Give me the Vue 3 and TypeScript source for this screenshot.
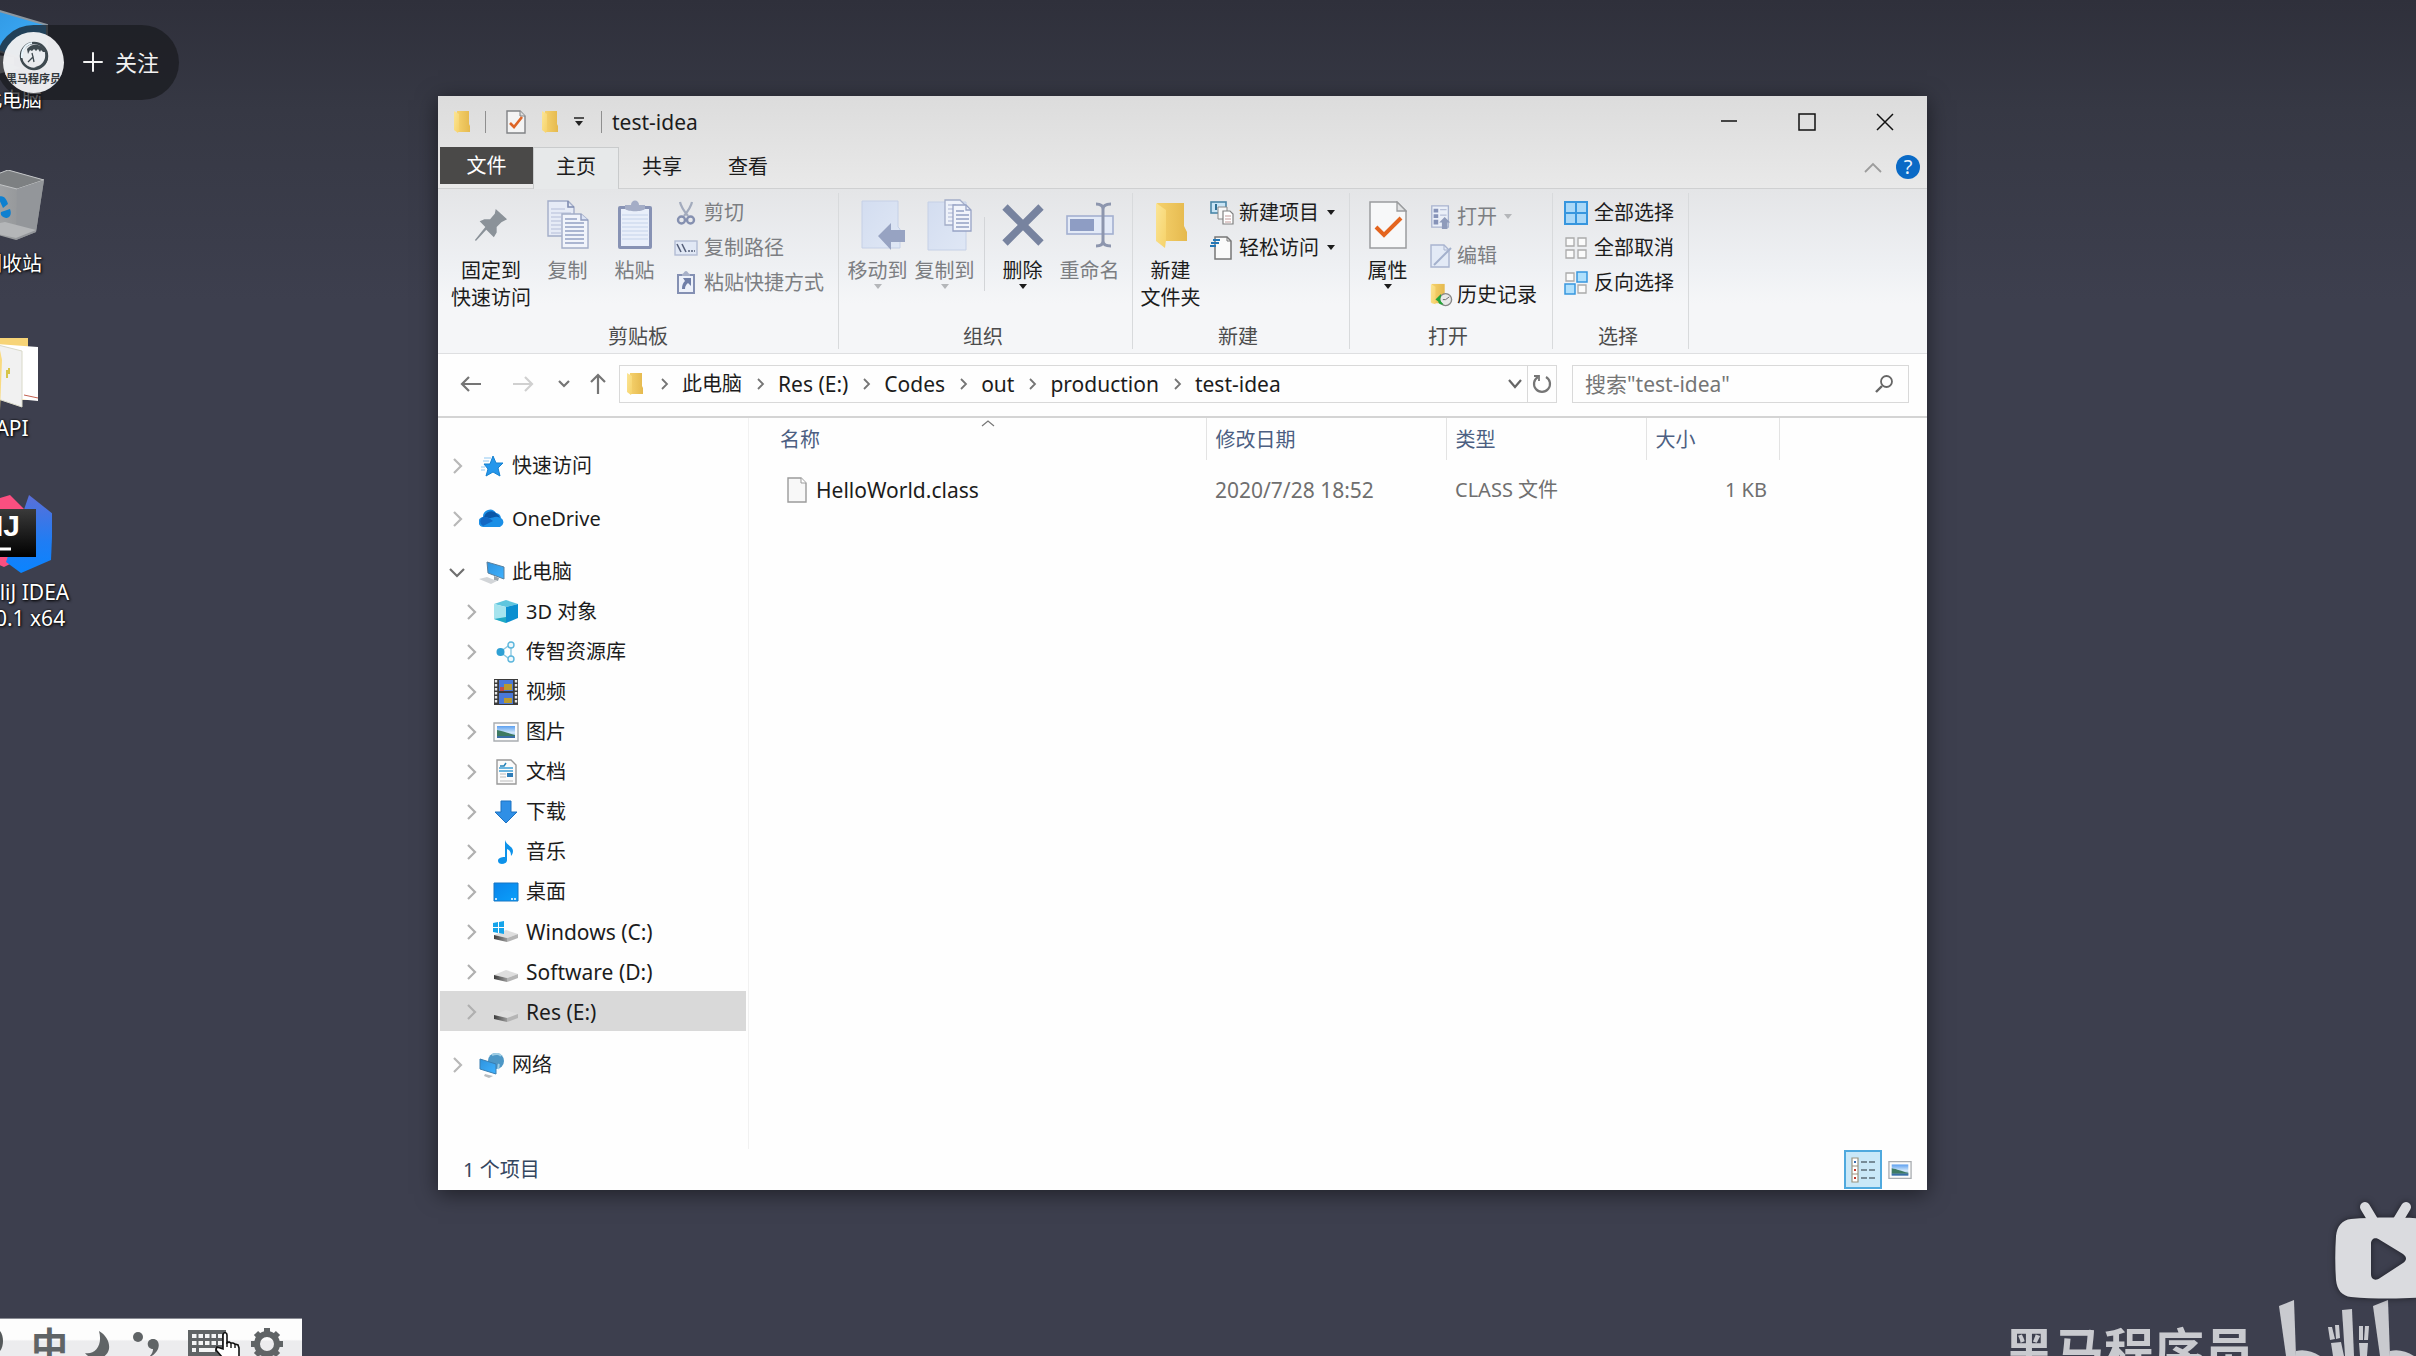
<script setup lang="ts">
import { ref } from 'vue'

interface Command {
  label: string
  icon: string
  disabled?: boolean
  menu?: boolean
}
interface BigCommand {
  lines: string[]
  icon: string
  disabled?: boolean
  menu?: boolean
  wide?: boolean
  divided?: boolean
}
interface Group {
  name: string
  key: string
  big: BigCommand[]
  small: Command[]
}
interface TreeNode {
  label: string
  icon: string
  latin?: boolean
  children?: TreeNode[]
}

const groups: Group[] = [
  {
    name: '剪贴板',
    key: 'clipboard',
    big: [
      { lines: ['固定到', '快速访问'], icon: 'pin', wide: true },
      { lines: ['复制'], icon: 'copy', disabled: true },
      { lines: ['粘贴'], icon: 'paste', disabled: true },
    ],
    small: [
      { label: '剪切', icon: 'cut', disabled: true },
      { label: '复制路径', icon: 'path', disabled: true },
      { label: '粘贴快捷方式', icon: 'shortcut', disabled: true },
    ],
  },
  {
    name: '组织',
    key: 'organize',
    big: [
      { lines: ['移动到'], icon: 'move', disabled: true, menu: true },
      { lines: ['复制到'], icon: 'copyto', disabled: true, menu: true },
      { lines: ['删除'], icon: 'delete', menu: true, divided: true },
      { lines: ['重命名'], icon: 'rename', disabled: true },
    ],
    small: [],
  },
  {
    name: '新建',
    key: 'new',
    big: [{ lines: ['新建', '文件夹'], icon: 'bigfolder' }],
    small: [
      { label: '新建项目', icon: 'newitem', menu: true },
      { label: '轻松访问', icon: 'easy', menu: true },
    ],
  },
  {
    name: '打开',
    key: 'open',
    big: [{ lines: ['属性'], icon: 'props', menu: true }],
    small: [
      { label: '打开', icon: 'open', disabled: true, menu: true },
      { label: '编辑', icon: 'edit', disabled: true },
      { label: '历史记录', icon: 'history' },
    ],
  },
  {
    name: '选择',
    key: 'select',
    big: [],
    small: [
      { label: '全部选择', icon: 'selall' },
      { label: '全部取消', icon: 'selnone' },
      { label: '反向选择', icon: 'selinv' },
    ],
  },
]

const tree: TreeNode[] = [
  { label: '快速访问', icon: 'star' },
  { label: 'OneDrive', icon: 'cloud' },
  {
    label: '此电脑',
    icon: 'pc',
    children: [
      { label: '3D 对象', icon: 'cube' },
      { label: '传智资源库', icon: 'share' },
      { label: '视频', icon: 'video' },
      { label: '图片', icon: 'picture' },
      { label: '文档', icon: 'doc' },
      { label: '下载', icon: 'download' },
      { label: '音乐', icon: 'music' },
      { label: '桌面', icon: 'desktop' },
      { label: 'Windows (C:)', icon: 'winDrive', latin: true },
      { label: 'Software (D:)', icon: 'drive', latin: true },
      { label: 'Res (E:)', icon: 'drive', latin: true },
    ],
  },
  { label: '网络', icon: 'network' },
]

const selected = ref('Res (E:)')
const query = ref('')
const crumbs = ['此电脑', 'Res (E:)', 'Codes', 'out', 'production', 'test-idea']
const tabs = ['主页', '共享', '查看']
const shortcuts = [
  { icon: 'bigpc', lines: ['此电脑'] },
  { icon: 'bin', lines: ['回收站'] },
  { icon: 'apifolder', lines: ['API'], latin: true },
  { icon: 'idea', lines: ['IntelliJ IDEA', '2020.1 x64'], latin: true },
]
</script>

<template>
  <svg class="defs" aria-hidden="true">
    <defs>
      <linearGradient id="gFolder" x1="0" y1="0" x2="1" y2="0">
        <stop offset="0" stop-color="#f5d16c" /><stop offset="1" stop-color="#e5b94e" />
      </linearGradient>
      <linearGradient id="gFlap" x1="0" y1="0" x2="1" y2="1">
        <stop offset="0" stop-color="#fbe596" /><stop offset="1" stop-color="#f6d269" />
      </linearGradient>
      <linearGradient id="gScreen" x1="0" y1="0" x2="1" y2="1">
        <stop offset="0" stop-color="#2f93dd" /><stop offset="1" stop-color="#3fb2ff" />
      </linearGradient>
      <linearGradient id="gDesk" x1="0" y1="0" x2="1" y2="1">
        <stop offset="0" stop-color="#0a84ea" /><stop offset="1" stop-color="#0aa0fb" />
      </linearGradient>
      <linearGradient id="gBox" x1="0" y1="0" x2="1" y2="1">
        <stop offset="0" stop-color="#d3ddf0" /><stop offset="1" stop-color="#dfe7f5" />
      </linearGradient>
      <linearGradient id="gDrive" x1="0" y1="0" x2="1" y2="0">
        <stop offset="0" stop-color="#3d3d3d" /><stop offset="1" stop-color="#9a9a9a" />
      </linearGradient>
      <linearGradient id="gIdea" x1="0" y1="0" x2="0" y2="1">
        <stop offset="0" stop-color="#5b6fd8" /><stop offset=".6" stop-color="#1f7df4" /><stop offset="1" stop-color="#0a84ff" />
      </linearGradient>
      <linearGradient id="gBlack" x1="0" y1="0" x2="0" y2="1">
        <stop offset="0" stop-color="#3a3a3a" /><stop offset="1" stop-color="#000" />
      </linearGradient>
      <linearGradient id="gSky" x1="0" y1="0" x2="0" y2="1">
        <stop offset="0" stop-color="#5b9ff0" /><stop offset=".55" stop-color="#cfe6fa" /><stop offset="1" stop-color="#7fb0dc" />
      </linearGradient>
      <linearGradient id="gBin" x1="0" y1="0" x2="1" y2="0">
        <stop offset="0" stop-color="#a7a9ab" /><stop offset="1" stop-color="#8a8d90" />
      </linearGradient>
    </defs>

    <symbol id="folder" viewBox="0 0 16 24">
      <path d="M3 1h12v13l1 2v6H3z" fill="url(#gFolder)" />
      <path d="M0 1l5 3v16l-1 3-4-3z" fill="url(#gFlap)" />
    </symbol>
    <symbol id="check" viewBox="0 0 20 24">
      <path d="M1 1h13l5 5v17H1z" fill="#f4f4f4" stroke="#808285" stroke-width="1.4" />
      <path d="M14 1v5h5" fill="#ddd" stroke="#808285" />
      <path d="M4 13l4 4 8-10" fill="none" stroke="#dd6526" stroke-width="2.6" />
    </symbol>
    <symbol id="pin" viewBox="0 0 36 36">
      <path d="M23 1l12 11-4 2-2 1-5 5 0 6-3 5-8-8L2 35l-1-1 11-14-6-6 5-2 6 0 5-6z" fill="#8b9299" />
    </symbol>
    <symbol id="copy" viewBox="0 0 42 50">
      <path d="M1 1h20l6 6v29H1z" fill="#e6ebf6" stroke="#a3adc8" stroke-width="1.4" />
      <path d="M21 1v6h6" fill="none" stroke="#7e8bb0" stroke-width="1.6" />
      <path d="M4 9h14M4 13h20M4 17h10M4 21h10M4 25h10M4 29h10M4 33h10" stroke="#b4bdd8" stroke-width="1.2" />
      <path d="M15 14h19l7 6v28H15z" fill="#f1f4fb" stroke="#a3adc8" stroke-width="1.4" />
      <path d="M34 14v6h7" fill="#dbe3f5" stroke="#8f9bbd" stroke-width="1.4" />
      <path d="M18 19h12M18 23h19M18 27h19M18 31h19M18 35h19M18 39h19M18 43h19" stroke="#93a0c3" stroke-width="1.4" />
    </symbol>
    <symbol id="paste" viewBox="0 0 36 50">
      <rect x="1" y="6" width="34" height="43" rx="2" fill="#8792b4" />
      <rect x="4" y="9" width="28" height="37" fill="#e9effa" />
      <path d="M5 15h26M5 19h26M5 23h26M5 27h26M5 31h26M5 35h26M5 39h26" stroke="#c5d3ea" />
      <path d="M8 5h6c0-6 8-6 8 0h6v4c-3 3-17 3-20 0z" fill="#a4adc6" />
    </symbol>
    <symbol id="cut" viewBox="0 0 24 24">
      <path d="M6 1c1 5 4 9 8 14M18 1c-1 5-4 9-8 14" fill="none" stroke="#a3abbd" stroke-width="2.2" />
      <circle cx="7.500" cy="19" r="3.500" fill="none" stroke="#8590b0" stroke-width="2.4" />
      <circle cx="16.500" cy="19" r="3.500" fill="none" stroke="#8590b0" stroke-width="2.4" />
    </symbol>
    <symbol id="path" viewBox="0 0 24 24">
      <rect x="1" y="5" width="22" height="14" fill="#e1e8f5" stroke="#b3bdd4" stroke-width="1.4" />
      <path d="M3 8l4 8M8 8l4 8" stroke="#56607a" stroke-width="1.6" />
      <path d="M14 15h2M17 15h2M20 15h1" stroke="#56607a" stroke-width="1.6" />
    </symbol>
    <symbol id="shortcut" viewBox="0 0 24 24">
      <path d="M3 3h18v20H3z" fill="#8490b3" />
      <path d="M5 5h14v16H5z" fill="#edf1fa" />
      <path d="M8 3c2 0 2-3 4-3s2 3 4 3v2H8z" fill="#a7b0c8" />
      <path d="M9 7h8v8l-3-3c-2 2-3 3-3 6H8c0-4 1-6 3-8z" fill="#707fa8" />
    </symbol>
    <symbol id="move" viewBox="0 0 44 50">
      <path d="M1 1h36v26l2 2v19H1z" fill="url(#gBox)" stroke="#c5d0e6" />
      <path d="M17 36l13-13v7h14v12H30v8z" fill="#97a3c2" />
    </symbol>
    <symbol id="copyto" viewBox="0 0 46 52">
      <path d="M1 3h38v48H1z" fill="url(#gBox)" stroke="#c5d0e6" />
      <path d="M18 1h15l5 5v20H18z" fill="#eef2fa" stroke="#a3adc8" stroke-width="1.3" />
      <path d="M21 6h8M21 10h5M21 14h5M21 18h5M21 22h5" stroke="#a9b4d2" stroke-width="1.2" />
      <path d="M26 6h13l5 5v21H26z" fill="#f1f4fb" stroke="#97a3c5" stroke-width="1.3" />
      <path d="M39 6v5h5" fill="none" stroke="#97a3c5" stroke-width="1.3" />
      <path d="M29 12h8M29 16h13M29 20h13M29 24h13M29 28h13" stroke="#93a0c3" stroke-width="1.3" />
    </symbol>
    <symbol id="delete" viewBox="0 0 42 42">
      <path d="M3 3l36 36M39 3L3 39" stroke="#77839f" stroke-width="7.500" />
    </symbol>
    <symbol id="rename" viewBox="0 0 48 46">
      <rect x="1" y="14" width="46" height="18" fill="#e3eaf7" stroke="#a3b0d0" stroke-width="1.6" />
      <rect x="4" y="17" width="24" height="12" fill="#8e9dc4" />
      <path d="M30 2c4 0 7 1 7 5v32c0 4-3 5-7 5M45 2c-4 0-8 1-8 5M45 44c-4 0-8-1-8-5" fill="none" stroke="#8d96ae" stroke-width="3" />
    </symbol>
    <symbol id="bigfolder" viewBox="0 0 32 46">
      <path d="M2 1h27v23l3 6v9H8z" fill="url(#gFolder)" />
      <path d="M1 1l10 7v30l-1 8-9-7z" fill="url(#gFlap)" />
    </symbol>
    <symbol id="newitem" viewBox="0 0 24 24">
      <rect x="1" y="1" width="15" height="11" fill="#c8e4f5" stroke="#4a86a8" stroke-width="1.600" />
      <path d="M6 3v6" stroke="#2f6f94" stroke-width="2" />
      <path d="M8 6h9v12H8z" fill="#f7f7f7" stroke="#888" />
      <path d="M13 10h7l3 3v10H13z" fill="#fff" stroke="#808080" stroke-width="1.200" />
      <path d="M15 15h6M15 18h6M15 21h6" stroke="#c29a9a" />
    </symbol>
    <symbol id="easy" viewBox="0 0 24 24">
      <path d="M5 1h12l4 4v18H5z" fill="#fafafa" stroke="#777" stroke-width="1.500" />
      <path d="M17 1v4h4" fill="none" stroke="#777" />
      <path d="M3 4h7M1 7h8M0 10h6" stroke="#2577b5" stroke-width="1.800" />
    </symbol>
    <symbol id="props" viewBox="0 0 38 48">
      <path d="M1 1h27l9 9v37H1z" fill="#f7f8f9" stroke="#9a9c9e" stroke-width="1.500" />
      <path d="M28 1v9h9z" fill="#e2e3e4" stroke="#9a9c9e" stroke-width="1.300" />
      <path d="M7 26l8 8 17-17" fill="none" stroke="#e4651f" stroke-width="4" />
    </symbol>
    <symbol id="open" viewBox="0 0 24 26">
      <path d="M2 1h18v23H2z" fill="#eaeff8" stroke="#a9b4cf" stroke-width="1.400" />
      <path d="M4 4h5v4H4zM4 10h5v4H4zM4 16h5v5H4z" fill="#8693b8" />
      <path d="M11 5h7M11 11h7" stroke="#b7c0d8" stroke-width="1.500" />
      <path d="M16 13l6 6h-3v7h-6v-7h-3z" fill="#8f9bba" />
    </symbol>
    <symbol id="edit" viewBox="0 0 24 24">
      <path d="M2 1h13l5 5v17H2z" fill="#e3eaf6" stroke="#a9b4cf" stroke-width="1.400" />
      <path d="M5 21L22 4" stroke="#a3b0cc" stroke-width="2" />
      <path d="M15 1v5h5" fill="none" stroke="#a9b4cf" />
    </symbol>
    <symbol id="history" viewBox="0 0 24 26">
      <path d="M2 1h14v21H2z" fill="url(#gFolder)" />
      <path d="M1 1l5 3v19l-5-2z" fill="url(#gFlap)" />
      <circle cx="17" cy="18" r="6.500" fill="#e8e8e8" stroke="#868686" stroke-width="1.500" />
      <path d="M17 18l4-3M17 18h-3" stroke="#666" />
      <path d="M6 18l6-6v3c-2 3 0 6 3 8-4 1-6-1-6-3z" fill="#24a338" />
    </symbol>
    <symbol id="selall" viewBox="0 0 24 24">
      <path d="M0 0h24v24H0z" fill="#3796de" />
      <path d="M2 2h9v9H2zM13 2h9v9h-9zM2 13h9v9H2zM13 13h9v9h-9z" fill="#a9d8f8" />
    </symbol>
    <symbol id="selnone" viewBox="0 0 24 24">
      <path d="M2 2h8v8H2zM14 2h8v8h-8zM2 14h8v8H2zM14 14h8v8h-8z" fill="#fbfbfb" stroke="#aaa" stroke-width="1.300" />
    </symbol>
    <symbol id="selinv" viewBox="0 0 24 24">
      <path d="M2 2h8v8H2zM14 14h8v8h-8z" fill="#fbfbfb" stroke="#aaa" stroke-width="1.300" />
      <path d="M13 1h10v10H13zM1 13h10v10H1z" fill="#b0e0fc" stroke="#3796de" stroke-width="1.500" />
    </symbol>

    <symbol id="star" viewBox="0 0 26 26">
      <path d="M14 3l3 7h7l-5 5 2 8-7-4-7 4 2-7-4-5h6z" fill="#2597ec" stroke="#1480cf" />
      <path d="M5 5h7M4 8h6M2 14h4M2 17h4" stroke="#8fc8f2" stroke-width="1.200" />
    </symbol>
    <symbol id="cloud" viewBox="0 0 26 26">
      <path d="M5 21a5 5 0 0 1-1-10 7 7 0 0 1 13-4 6 6 0 0 1 5 5 5 5 0 0 1-1 9z" fill="#1b8fe6" />
      <path d="M5 11a7.500 7.500 0 0 1 13-3 8 8 0 0 1 3 4c-5-3-8 1-11 0s-4-1-5-1z" fill="#0a57a8" />
      <path d="M4 20a5 5 0 0 1 0-9c4-1 7 2 10 4z" fill="#1268c4" />
    </symbol>
    <symbol id="pc" viewBox="0 0 26 26">
      <path d="M8 3l17 5v12L9 14z" fill="url(#gScreen)" stroke="#5a7f9c" />
      <path d="M15 17l5 2-1 3-4-1z" fill="#9aa4ab" />
      <path d="M0 20l8-2 10 4-6 3z" fill="#d2d5d8" />
    </symbol>
    <symbol id="cube" viewBox="0 0 26 26">
      <path d="M1 5l12-4 12 4-12 3z" fill="#5fc6de" />
      <path d="M1 5l12 3v16L1 20z" fill="#a6e4ee" />
      <path d="M25 5L13 8v16l12-5z" fill="#0b8fd0" />
      <path d="M13 18l-12 2 12 4z" fill="#1fa9c4" />
    </symbol>
    <symbol id="share" viewBox="0 0 26 26">
      <path d="M7 13l11-8v16z" fill="none" stroke="#8cc9e2" stroke-width="1.400" />
      <circle cx="7.500" cy="13" r="4" fill="#2fa0d4" />
      <circle cx="18" cy="6" r="3" fill="#eef8fc" stroke="#5cb6dc" stroke-width="1.400" />
      <circle cx="18" cy="20" r="3" fill="#eef8fc" stroke="#5cb6dc" stroke-width="1.400" />
    </symbol>
    <symbol id="video" viewBox="0 0 26 26">
      <path d="M1 0h24v26H1z" fill="#3b3b3b" />
      <path d="M6 1h14v11H6zM6 14h14v11H6z" fill="#4a78d8" />
      <path d="M11 5h8v6h-8zM11 19h8v5h-8z" fill="#b99a2e" />
      <path d="M7 8h4v4H7z" fill="#c44c44" />
      <path d="M3 1v24M23 1v24" stroke="#e8e8e8" stroke-width="2.400" stroke-dasharray="2.500 1.500" />
    </symbol>
    <symbol id="picture" viewBox="0 0 26 26">
      <path d="M1 4h24v18H1z" fill="#fbfbfb" stroke="#a9adb1" stroke-width="1.400" />
      <path d="M4 7h18v12H4z" fill="url(#gSky)" />
      <path d="M4 11c6 1 10 3 18 5v1H4z" fill="#3e7a62" />
      <path d="M4 17h18v2H4z" fill="#3a6ea5" />
    </symbol>
    <symbol id="doc" viewBox="0 0 26 26">
      <path d="M4 1h14l5 5v19H4z" fill="#fbfbfb" stroke="#999" stroke-width="1.400" />
      <path d="M7 7h4l2-3" stroke="#2583b8" stroke-width="1.500" fill="none" />
      <path d="M6 9h14M6 12h14" stroke="#3ea0d8" stroke-width="1.600" />
      <path d="M7 15h6M7 18h6M7 22h13" stroke="#bbb" stroke-width="1.200" />
      <path d="M14 14h6v4h-6z" fill="#2f7db8" />
    </symbol>
    <symbol id="download" viewBox="0 0 26 26">
      <path d="M8 2h10v11h6L13 24 2 13h6z" fill="#2f8fe6" stroke="#1c72c2" />
    </symbol>
    <symbol id="music" viewBox="0 0 26 26">
      <path d="M12 1c1 5 8 6 8 11 0 2-1 4-2 5 0-4-1-6-4-7v11c0 5-9 5-9 1 0-3 3-4 7-4z" fill="#0d92ea" />
    </symbol>
    <symbol id="desktop" viewBox="0 0 26 26">
      <path d="M1 4h24v18H1z" fill="url(#gDesk)" stroke="#1776c4" stroke-width="1" />
      <path d="M2 20h2M18 20h2M21 20h2" stroke="#fff" stroke-width="1.500" />
    </symbol>
    <symbol id="drive" viewBox="0 0 26 26">
      <path d="M1 16l12-5 12 4-11 4z" fill="#dedede" />
      <path d="M1 16l13 3v4L1 20z" fill="url(#gDrive)" />
      <path d="M14 19l11-4v4l-11 4z" fill="#b5b5b5" />
    </symbol>
    <symbol id="winDrive" viewBox="0 0 26 26">
      <path d="M1 16l12-5 12 4-11 4z" fill="#dedede" />
      <path d="M1 16l13 3v4L1 20z" fill="url(#gDrive)" />
      <path d="M14 19l11-4v4l-11 4z" fill="#b5b5b5" />
      <path d="M0 4l5-1v5H0zM6 3l5-1v6H6zM0 9h5v5l-5-1zM6 9h5v6l-5-1z" fill="#15a4ea" />
    </symbol>
    <symbol id="network" viewBox="0 0 26 26">
      <circle cx="17" cy="9" r="8" fill="#4d97c6" />
      <path d="M13 3c4-2 8-1 9 1M20 12c-1 2 0 3-1 5" fill="none" stroke="#9fcde4" stroke-width="2" />
      <path d="M1 7l16 5v10L1 17z" fill="url(#gScreen)" stroke="#3a7fb2" />
      <path d="M6 22l8 2-4 2-5-2z" fill="#b9bdc0" />
    </symbol>
    <symbol id="file" viewBox="0 0 20 26">
      <path d="M1 1h13l5 5v19H1z" fill="#f8f8f8" stroke="#9b9b9b" stroke-width="1.400" />
      <path d="M14 1v5h5" fill="#fff" stroke="#9b9b9b" />
    </symbol>

    <symbol id="bigpc" viewBox="0 0 72 72">
      <path d="M0 -6L71 15V56L0 34z" fill="url(#gScreen)" stroke="#8b969f" stroke-width="2" />
      <path d="M20 45l18 2v8l-18-2z" fill="#c9ccce" />
      <path d="M0 48l30 4 14 6-22 6z" fill="#c4c6c8" />
    </symbol>
    <symbol id="bin" viewBox="0 0 72 72">
      <path d="M6 10L32 0l36 10-8 52-20 8-28-8z" fill="url(#gBin)" />
      <path d="M6 10L32 0l36 10-27 9z" fill="#7d8082" stroke="#c3c5c7" />
      <path d="M41 19l27-9-8 52-20 8z" fill="#93969a" />
      <path d="M12 62l-1-6 18-4 31 8-20 8z" fill="#b4b6b8" />
      <path d="M22 27c6-3 9 3 10 7l-5 4zM25 42l9-3c2 5 0 9-4 9-4-1-6-3-5-6zM14 34l6 2-2 9-6-4z" fill="#0e80d0" />
    </symbol>
    <symbol id="apifolder" viewBox="0 0 72 72">
      <path d="M2 0h50v62H2z" fill="#f7d477" />
      <path d="M22 6l40 3v54l-40-4z" fill="#fff" />
      <path d="M48 57l14 3" stroke="#c3604f" />
      <path d="M22 7l24 6v56l-24-8z" fill="#f1f1f1" stroke="#d9d9c8" />
      <path d="M31 32v8M33 30v6" stroke="#d7c54a" stroke-width="2" />
      <path d="M2 4l22 8 2 10-2 50L2 64z" fill="#f9da80" />
    </symbol>
    <symbol id="idea" viewBox="0 0 80 80">
      <path d="M2 12L38 1l22 22-8 40-20 10L4 60z" fill="#fb4f80" />
      <path d="M57 1l24 19-2 46-30 13L34 68z" fill="url(#gIdea)" />
      <path d="M16 15h48v48H16z" fill="url(#gBlack)" />
      <path d="M22 55h17" stroke="#fff" stroke-width="3" />
    </symbol>
  </svg>

  <div class="desktop">
    <ul class="shortcuts">
      <li v-for="s in shortcuts" :key="s.icon" :class="{ latin: s.latin }">
        <span class="art">
          <svg :class="['shot', s.icon]"><use :href="'#' + s.icon" /></svg>
          <span v-if="s.icon === 'idea'" class="ij">IJ</span>
        </span>
        <span v-for="l in s.lines" :key="l" class="cap">{{ l }}</span>
      </li>
    </ul>

    <div class="follow">
      <span class="avatar">
        <svg width="32" height="30" viewBox="0 0 32 30">
          <circle cx="16" cy="15" r="13" fill="none" stroke="#3f4a50" stroke-width="2.500" />
          <path d="M9 8c5-7 16-5 19 3l-3 0-2-2-1 2-2-3-2 2-2-2-2 2-2-1-2 4z" fill="#3f4a50" />
          <path d="M4 17c-1-8 4-14 10-15" fill="none" stroke="#e8f4fb" stroke-width="2" />
          <path d="M26 9c4 8-2 17-10 17 5 3 14-1 14-11z" fill="#3f4a50" />
          <path d="M10 21l5-5-1-4M15 16l1 5" fill="none" stroke="#3f4a50" stroke-width="1.300" />
        </svg>
        <span class="brand">黑马程序员</span>
      </span>
      <button type="button" class="followbtn">
        <svg width="20" height="20" viewBox="0 0 20 20"><path d="M10 1v18M1 10h18" stroke="#f2f2f2" stroke-width="2" stroke-linecap="round" /></svg>
        关注
      </button>
    </div>

    <main class="window">
      <header class="titlebar">
        <svg class="f16"><use href="#folder" /></svg>
        <i class="tsep first"></i>
        <button type="button" class="qa" aria-label="属性"><svg class="f20"><use href="#check" /></svg></button>
        <button type="button" class="qa" aria-label="新建文件夹"><svg class="f16"><use href="#folder" /></svg></button>
        <button type="button" class="qa" aria-label="自定义快速访问工具栏">
          <svg width="10" height="10" viewBox="0 0 10 10"><path d="M0 1h10" stroke="#222" stroke-width="1.500" /><path d="M1 4h8L5 9z" fill="#222" /></svg>
        </button>
        <i class="tsep"></i>
        <h1>test-idea</h1>
        <div class="winbtns">
          <button type="button" aria-label="最小化"><svg width="18" height="18"><path d="M1 8h16" stroke="#111" stroke-width="1.500" /></svg></button>
          <button type="button" aria-label="最大化"><svg width="18" height="18"><path d="M1 1h16v16H1z" fill="none" stroke="#111" stroke-width="1.500" /></svg></button>
          <button type="button" aria-label="关闭"><svg width="18" height="18"><path d="M1 1l16 16M17 1L1 17" stroke="#111" stroke-width="1.500" /></svg></button>
        </div>
      </header>

      <nav class="tabs">
        <button type="button" class="filetab">文件</button>
        <button v-for="(t, i) in tabs" :key="t" type="button" :class="['tab', { active: i === 0 }]">{{ t }}</button>
        <span class="fill"></span>
        <button type="button" class="collapse" aria-label="最小化功能区"><svg width="18" height="11"><path d="M1 10l8-8 8 8" fill="none" stroke="#9c9c9c" stroke-width="1.800" /></svg></button>
        <button type="button" class="help" aria-label="帮助">?</button>
      </nav>

      <section class="ribbon">
        <div v-for="g in groups" :key="g.key" :class="['group', g.key]">
          <div class="controls">
            <template v-for="b in g.big" :key="b.icon">
              <i v-if="b.divided" class="bsep"></i>
              <button type="button" :class="['big', { wide: b.wide, off: b.disabled }]">
                <span class="bigicon"><svg :class="'s-' + b.icon"><use :href="'#' + b.icon" /></svg></span>
                <span v-for="l in b.lines" :key="l" class="line">{{ l }}</span>
                <i v-if="b.menu" class="caret"></i>
              </button>
            </template>
            <div v-if="g.small.length" class="smalls">
              <button v-for="c in g.small" :key="c.icon" type="button" :class="['small', { off: c.disabled }]">
                <svg width="24" height="24"><use :href="'#' + c.icon" /></svg>
                <span>{{ c.label }}</span>
                <i v-if="c.menu" class="caret"></i>
              </button>
            </div>
          </div>
          <div class="gname">{{ g.name }}</div>
        </div>
      </section>

      <section class="navbar">
        <button type="button" class="arrow back" aria-label="返回"><svg width="22" height="20"><path d="M21 10H2M9 3l-7 7 7 7" fill="none" stroke="#757575" stroke-width="2.200" /></svg></button>
        <button type="button" class="arrow" aria-label="前进"><svg width="22" height="20"><path d="M1 10h19M13 3l7 7-7 7" fill="none" stroke="#d0d0d0" stroke-width="2.200" /></svg></button>
        <button type="button" class="arrow recent" aria-label="最近浏览的位置"><svg width="12" height="8"><path d="M1 1l5 5 5-5" fill="none" stroke="#757575" stroke-width="2.200" /></svg></button>
        <button type="button" class="arrow up" aria-label="上移"><svg width="18" height="22"><path d="M9 21V3M2 9l7-7 7 7" fill="none" stroke="#757575" stroke-width="2.200" /></svg></button>
        <div class="address">
          <svg class="f16"><use href="#folder" /></svg>
          <template v-for="c in crumbs" :key="c">
            <svg class="gt" width="8" height="12"><path d="M1 1l5 5-5 5" fill="none" stroke="#757575" stroke-width="1.800" /></svg>
            <a href="#" :class="{ latin: c !== '此电脑' }">{{ c }}</a>
          </template>
          <span class="fill"></span>
          <button type="button" class="drop" aria-label="以前的位置"><svg width="16" height="10"><path d="M2 1l6 7 6-7" fill="none" stroke="#666" stroke-width="2.200" /></svg></button>
          <button type="button" class="refresh" aria-label="刷新"><svg width="20" height="22" viewBox="0 0 20 22"><path d="M6 4a8 8 0 1 0 8 0" fill="none" stroke="#757575" stroke-width="2.200" /><path d="M2 3h5v5" fill="none" stroke="#757575" stroke-width="1.800" /></svg></button>
        </div>
        <label class="search">
          <input v-model="query" type="text" placeholder="搜索&quot;test-idea&quot;" aria-label="搜索" />
          <svg width="20" height="20" viewBox="0 0 20 20"><circle cx="12.500" cy="7.500" r="5.500" fill="none" stroke="#666" stroke-width="1.800" /><path d="M8 12l-6 6" stroke="#666" stroke-width="2.400" /></svg>
        </label>
      </section>

      <div class="body">
        <aside class="tree">
          <div v-for="n in tree" :key="n.label" class="branch">
            <button type="button" class="node">
              <svg class="exp" width="16" height="16">
                <path v-if="n.children" d="M1 5l7 7 7-7" fill="none" stroke="#6f6f6f" stroke-width="2.200" />
                <path v-else d="M5 1l7 7-7 7" fill="none" stroke="#b8b8b8" stroke-width="2.200" />
              </svg>
              <svg width="26" height="26"><use :href="'#' + n.icon" /></svg>
              <span>{{ n.label }}</span>
            </button>
            <button
              v-for="c in n.children ?? []"
              :key="c.label"
              type="button"
              :class="['node', 'child', { sel: c.label === selected, latin: c.latin }]"
              @click="selected = c.label"
            >
              <svg class="exp" width="16" height="16"><path d="M5 1l7 7-7 7" fill="none" stroke="#b0b0b0" stroke-width="2.200" /></svg>
              <svg width="26" height="26"><use :href="'#' + c.icon" /></svg>
              <span>{{ c.label }}</span>
            </button>
          </div>
        </aside>

        <div class="files">
          <table>
            <colgroup><col class="c1" /><col class="c2" /><col class="c3" /><col class="c4" /></colgroup>
            <thead>
              <tr>
                <th class="sorted">名称<svg class="sort" width="14" height="7"><path d="M1 6l6-5 6 5" fill="none" stroke="#777" stroke-width="1.200" /></svg></th>
                <th>修改日期</th>
                <th>类型</th>
                <th>大小</th>
              </tr>
            </thead>
            <tbody>
              <tr>
                <td><span class="fname"><svg width="20" height="26"><use href="#file" /></svg>HelloWorld.class</span></td>
                <td class="dim latin">2020/7/28 18:52</td>
                <td class="dim">CLASS 文件</td>
                <td class="dim size">1 KB</td>
              </tr>
            </tbody>
          </table>
        </div>
      </div>

      <footer class="status">
        <span>1 个项目</span>
        <span class="fill"></span>
        <button type="button" class="view on" aria-label="详细信息">
          <svg width="26" height="26"><path d="M2 1h6v24H2zM2 9h6M2 17h6" fill="#fff" stroke="#9a9480" stroke-width="1.200" /><path d="M4 4h2v2H4z" fill="#3b6fb0" /><path d="M4 12h2v2H4zM4 20h2v2H4z" fill="#c0392b" /><path d="M11 5h6M19 5h6M11 13h6M19 13h6M11 21h6M19 21h6" stroke="#5c6d78" stroke-width="1.400" /></svg>
        </button>
        <button type="button" class="view" aria-label="大图标"><svg width="24" height="24"><use href="#picture" /></svg></button>
      </footer>
    </main>

    <div class="watermark">
      <span class="wtext">黑马程序员</span>
      <svg class="wlogo" width="138" height="66" viewBox="0 0 138 66" aria-label="bilibili">
        <g fill="#c9cacf">
          <path d="M1 16L16 10 18 66H8z" />
          <path d="M18 61C26 59 34 61 42 66H18z" />
          <path d="M50 37h4l3 12-5 1zM57 35h4l1 13-4 1zM53 53l10-1 3 14H55z" />
          <path d="M64 20l10-1 2 47h-9z" />
          <path d="M81 36h4v14h-4zM87 36h4l-1 14h-4zM81 53h9l-1 13h-7z" />
          <path d="M95 16l15-6 2 56h-10z" />
          <path d="M112 61c8-2 16 0 24 5h-24z" />
        </g>
      </svg>
    </div>

    <svg class="tv" width="82" height="104" viewBox="0 0 82 104">
      <path d="M31 8l9 15M72 8l-9 15" stroke="#dadbdf" stroke-width="10" stroke-linecap="round" />
      <path d="M17 20C40 18 72 18 94 20c9 1 13 7 14 17 1 14 1 29 0 43-1 11-6 17-15 18-22 2-54 2-76 0-9-1-14-7-15-17-1-14-1-29 0-44 1-10 6-16 15-17zM37 45v30c0 6 5 7 9 4l23-15c4-3 4-6 0-9L46 41c-4-3-9-2-9 4z" fill="#dadbdf" fill-rule="evenodd" />
    </svg>

    <div class="ime">
      <svg class="edge" width="4" height="38"><path d="M0 1c4 5 4 15 0 20z" fill="#55595b" /></svg>
      <span class="zh">中</span>
      <svg width="26" height="34" viewBox="0 0 26 34"><path d="M15 1c7 4 11 11 10 18-2 10-16 14-24 4 10 2 18-8 14-22z" fill="#606466" /></svg>
      <svg width="26" height="34" viewBox="0 0 26 34"><circle cx="5" cy="7" r="5" fill="#606466" /><path d="M20 9c5 0 7 5 5 10-2 4-5 7-9 8 3-3 4-5 4-8-7 0-7-10 0-10z" fill="#606466" /></svg>
      <svg class="kb" width="38" height="34" viewBox="0 0 38 34">
        <rect width="38" height="26" fill="#606466" />
        <path d="M4 6h30M4 13h30" stroke="#f4f5f6" stroke-width="4" stroke-dasharray="4.500 2" />
        <path d="M4 20h4M11 20h16M30 20h4" stroke="#f4f5f6" stroke-width="4" />
      </svg>
      <svg class="gear" width="34" height="34" viewBox="0 0 34 34">
        <circle cx="17" cy="17" r="10" fill="none" stroke="#606466" stroke-width="6" />
        <path d="M17 1v6M17 27v6M1 17h6M27 17h6M6 6l4 4M24 24l4 4M28 6l-4 4M10 24l-4 4" stroke="#606466" stroke-width="6" />
      </svg>
    </div>
    <svg class="hand" width="26" height="24" viewBox="0 0 26 24">
      <path d="M8 3c0-3 4-3 4 0v8l2-1 2 1 2 0 2 1 3 1 1 3v9H7l-6-7 1-3 6 2z" fill="#fff" stroke="#111" stroke-width="1.600" />
      <path d="M12 10v5M16 11v5M20 12v4" stroke="#111" stroke-width="1.400" />
    </svg>
  </div>
</template>

<style>
html,
body {
  background: #3d3f4e;
}
</style>

<style scoped>
.defs {
  position: absolute;
  width: 0;
  height: 0;
}
.desktop {
  position: relative;
  box-sizing: border-box;
  min-height: 100vh;
  padding: 96px 489px 166px 438px;
  overflow: hidden;
  display: flex;
  background: linear-gradient(#2f303b, #363844 110px, #3d3f4e 300px);
  font: 20px/26px "Noto Sans", "Noto Sans CJK SC", sans-serif;
  color: #1c1c1c;
}
.desktop *,
.desktop *::before {
  box-sizing: border-box;
}
svg {
  flex: none;
  display: block;
}
button {
  font: inherit;
  color: inherit;
  background: none;
  border: 0;
  padding: 0;
  margin: 0;
  display: flex;
  align-items: center;
}
.fill {
  flex: 1;
}
.latin {
  font-size: 21px;
}
.f16 {
  width: 16px;
  height: 24px;
}
.f20 {
  width: 20px;
  height: 24px;
}

/* desktop shortcuts */
.shortcuts {
  position: absolute;
  left: -48px;
  top: 10px;
  width: 120px;
  margin: 0;
  padding: 0;
  list-style: none;
}
.shortcuts li {
  height: 164px;
  display: flex;
  flex-direction: column;
  align-items: center;
  color: #fff;
  text-shadow: 1px 1px 3px #000, 0 0 2px #000;
}
.art {
  position: relative;
  height: 72px;
  margin-bottom: 5px;
  display: flex;
  align-items: flex-end;
}
.shot {
  width: 72px;
  height: 72px;
  overflow: visible;
}
.shot.bin {
  margin-bottom: 4px;
}
.shot.idea {
  width: 80px;
  height: 80px;
}
.ij {
  position: absolute;
  left: 23px;
  top: 8px;
  font: bold 30px/32px "Liberation Sans", sans-serif;
  text-shadow: none;
}
.cap {
  white-space: nowrap;
}

/* follow pill */
.follow {
  position: absolute;
  left: -4px;
  top: 25px;
  width: 183px;
  height: 75px;
  border-radius: 38px;
  background: rgba(25, 27, 31, 0.72);
  display: flex;
  align-items: center;
  padding-left: 7px;
  gap: 19px;
}
.avatar {
  width: 61px;
  height: 61px;
  border-radius: 50%;
  overflow: hidden;
  background: rgba(244, 246, 248, 0.95);
  display: flex;
  flex-direction: column;
  align-items: center;
  padding-top: 9px;
}
.brand {
  font: bold 11px/14px "Noto Sans CJK SC", sans-serif;
  white-space: nowrap;
  color: #33383c;
}
.followbtn {
  gap: 12px;
  padding-bottom: 2px;
  color: #f2f2f2;
  font-size: 22px;
}

/* window */
.window {
  flex: 1;
  display: flex;
  flex-direction: column;
  min-width: 0;
  background: #fefefe;
  box-shadow: 0 4px 20px rgba(0, 0, 0, 0.5);
}
.titlebar {
  height: 51px;
  padding: 0 3px 0 16px;
  display: flex;
  align-items: center;
  background: linear-gradient(#dcdcdc, #e3e3e3);
}
.tsep {
  width: 1px;
  height: 22px;
  background: #8f8f8f;
  margin: 0 10px 0 17px;
}
.tsep.first {
  margin: 0 20px 0 15px;
}
.qa + .qa {
  margin-left: 16px;
}
h1 {
  margin: 0;
  flex: 1;
  font-size: 21px;
  font-weight: 400;
}
.winbtns {
  display: flex;
  align-self: stretch;
}
.winbtns button {
  width: 78px;
  justify-content: center;
}
.tabs {
  height: 42px;
  padding: 0 7px 0 2px;
  display: flex;
  align-items: stretch;
  background: linear-gradient(#e3e3e3, #e9e9e9);
  box-shadow: inset 0 -1px #cfd0d1;
}
.filetab {
  width: 93px;
  height: 37px;
  justify-content: center;
  background: #4a4948;
  color: #fff;
}
.tab {
  width: 86px;
  padding-bottom: 3px;
  justify-content: center;
  border: 1px solid transparent;
  border-bottom: 0;
}
.tab.active {
  background: #e7e9ea;
  border-color: #c9cbcc;
}
.collapse {
  margin-right: 14px;
  padding-bottom: 2px;
}
.help {
  align-self: flex-start;
  margin-top: 8px;
  width: 24px;
  height: 24px;
  border-radius: 50%;
  background: #0a6ac6;
  color: #e8f2fb;
  justify-content: center;
  font-size: 20px;
}

/* ribbon */
.ribbon {
  height: 165px;
  padding: 4px 0;
  display: flex;
  background: linear-gradient(#e4e5e7, #eff1f4 50%, #f5f6f8 70%);
  border-bottom: 1px solid #dedfe1;
}
.group {
  display: flex;
  flex-direction: column;
  border-right: 1px solid #d8dadc;
}
.clipboard {
  width: 401px;
  padding-left: 10px;
}
.organize {
  width: 294px;
  padding-left: 5px;
}
.new {
  width: 217px;
  padding-left: 4px;
}
.open {
  width: 203px;
  padding-left: 4px;
}
.select {
  width: 136px;
  padding-left: 5px;
}
.controls {
  height: 132px;
  display: flex;
  align-items: flex-start;
}
.gname {
  padding-right: 10px;
  line-height: 24px;
  text-align: center;
  color: #4c4c4c;
}
.big {
  width: 67px;
  flex-direction: column;
  padding-top: 5px;
}
.big.wide {
  width: 86px;
}
.bigicon {
  height: 54px;
  margin-bottom: 5px;
  display: flex;
  align-items: center;
}
.line {
  line-height: 27px;
  white-space: nowrap;
}
.off {
  color: #7c7e82;
}
.s-pin { width: 34px; height: 36px; }
.s-copy { width: 42px; height: 50px; }
.s-paste { width: 36px; height: 50px; }
.s-move { width: 44px; height: 50px; }
.s-copyto { width: 46px; height: 52px; }
.s-move,
.s-copyto {
  margin-left: 10px;
}
.s-delete { width: 42px; height: 42px; }
.s-rename { width: 48px; height: 46px; }
.s-bigfolder { width: 32px; height: 46px; }
.s-props { width: 38px; height: 48px; }
.caret {
  width: 0;
  height: 0;
  border: 4px solid transparent;
  border-top: 5px solid #1c1c1c;
  border-bottom: 0;
}
.off .caret {
  border-top-color: #b4b6b9;
}
.bsep {
  width: 1px;
  height: 74px;
  margin: 24px 4px 0 6px;
  background: #d3d5d8;
}
.smalls {
  padding: 2px 0 0 6px;
}
.open .smalls {
  padding: 4px 0 0 8px;
}
.small {
  height: 35px;
  gap: 6px;
  white-space: nowrap;
}
.open .small {
  height: 39px;
  gap: 4px;
}
.new .small {
  gap: 5px;
}
.small .caret {
  margin-left: 3px;
}

/* address bar */
.navbar {
  height: 64px;
  padding: 0 18px 3px 22px;
  display: flex;
  align-items: center;
  border-bottom: 2px solid #d4d4d4;
}
.arrow {
  margin-right: 24px;
}
.back {
  margin-right: 30px;
}
.recent {
  margin-right: 19px;
}
.up {
  margin-right: 12px;
}
.address {
  flex: 1;
  height: 38px;
  margin-right: 15px;
  padding-left: 7px;
  border: 1px solid #d9d9d9;
  display: flex;
  align-items: center;
}
.address .f16 {
  margin-right: 3px;
}
.address a {
  color: inherit;
  text-decoration: none;
  white-space: nowrap;
}
.gt {
  margin: 0 13px 0 15px;
}
.drop {
  margin-right: 4px;
}
.refresh {
  width: 29px;
  align-self: stretch;
  justify-content: center;
  border-left: 1px solid #d9d9d9;
}
.search {
  width: 337px;
  height: 38px;
  padding: 0 14px 0 12px;
  border: 1px solid #d9d9d9;
  display: flex;
  align-items: center;
}
.search input {
  flex: 1;
  min-width: 0;
  padding: 0;
  border: 0;
  outline: 0;
  background: none;
  font: inherit;
  font-size: 21px;
}
.search input::placeholder {
  color: #757575;
  opacity: 1;
}

/* body */
.body {
  flex: 1;
  display: flex;
}
.tree {
  width: 311px;
  padding: 27px 2px 0;
  border-right: 1px solid #f1f1f1;
}
.branch {
  margin-bottom: 13px;
}
.node {
  width: 100%;
  height: 40px;
  padding: 2px 0 0 9px;
  white-space: nowrap;
}
.node.child {
  padding-left: 23px;
}
.exp {
  margin-right: 14px;
}
.node span {
  margin-left: 7px;
}
.sel {
  background: #d9d9d9;
}
.files {
  flex: 1;
  padding-left: 22px;
}
table {
  width: 1008px;
  table-layout: fixed;
  border-collapse: collapse;
}
.c1 { width: 435px; }
.c2 { width: 240px; }
.c3 { width: 200px; }
.c4 { width: 133px; }
th {
  height: 42px;
  padding: 2px 0 0 9px;
  border-right: 1px solid #e3e3e3;
  text-align: left;
  font-weight: 400;
  color: #4c5f82;
}
.sorted {
  position: relative;
}
.sort {
  position: absolute;
  left: 0;
  right: 0;
  top: 2px;
  margin: 0 auto;
}
td {
  height: 60px;
  padding: 0 12px 0 9px;
}
.fname {
  display: flex;
  align-items: center;
  gap: 9px;
  padding-left: 7px;
  font-size: 21px;
}
.dim {
  color: #6f6f6f;
}
.size {
  text-align: right;
}
.status {
  height: 41px;
  padding: 0 15px 0 25px;
  display: flex;
  align-items: center;
  color: #34465f;
}
.view.on {
  width: 38px;
  height: 39px;
  margin-right: 6px;
  justify-content: center;
  background: #c9e8f8;
  border: 2px solid #4fa9de;
}

/* overlays on the wallpaper */
.watermark {
  position: absolute;
  right: 0;
  bottom: 0;
  height: 66px;
  display: flex;
  align-items: flex-start;
  overflow: hidden;
}
.wtext {
  margin: 28px 24px 0 0;
  font: bold 50px/60px "Noto Sans CJK SC", sans-serif;
  color: #c9cacf;
  white-space: nowrap;
}
.tv {
  position: absolute;
  right: 0;
  bottom: 53px;
  overflow: hidden;
  filter: drop-shadow(0 0 3px rgba(0, 0, 0, 0.5));
}
.ime {
  position: absolute;
  left: 0;
  bottom: 0;
  width: 302px;
  height: 38px;
  padding-top: 11px;
  overflow: hidden;
  display: flex;
  align-items: flex-start;
  background: linear-gradient(#fdfdfd 55%, #ececee 60%);
  border-top: 1px solid #8a8c94;
}
.zh {
  margin: -5px 16px 0 27px;
  width: 37px;
  font: bold 37px/38px "Noto Sans CJK SC", sans-serif;
  color: #606466;
}
.ime svg + svg {
  margin-left: 23px;
}
.ime .kb {
  margin-left: 29px;
}
.ime .gear {
  margin: -3px 0 0 24px;
}
.hand {
  position: absolute;
  left: 215px;
  bottom: 0;
}
</style>
